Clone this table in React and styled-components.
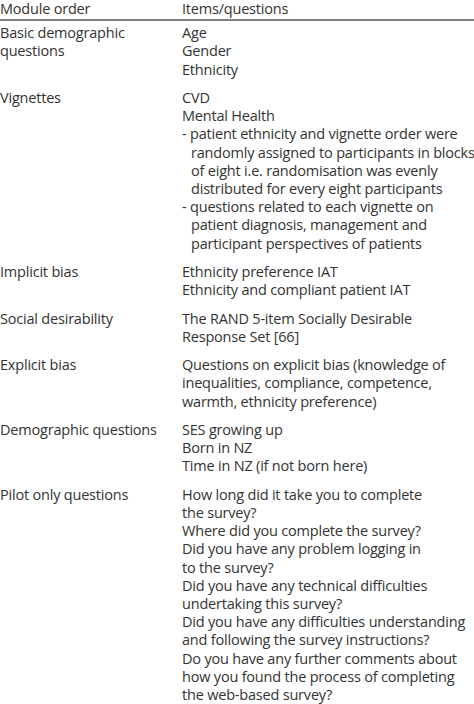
import React from "react";
import styled, { createGlobalStyle } from "styled-components";

const Global = createGlobalStyle`
  html, body { margin: 0; padding: 0; background: #fff; }
  body { width: 474px; height: 704px; overflow: hidden; }
`;

const Table = styled.div`
  width: 474px;
  font-family: "Open Sans", "Noto Sans", sans-serif;
  font-size: 14.5px;
  letter-spacing: -0.2px;
  line-height: 18.2px;
  color: #333;
`;

const HeaderRow = styled.div`
  display: grid;
  grid-template-columns: 182px 1fr;
  padding-bottom: 1px;
  border-bottom: 2px solid #7f7f7f;
`;

const Body = styled.div`
  display: grid;
  row-gap: 10.2px;
  padding-top: 3px;
`;

const Row = styled.div`
  display: grid;
  grid-template-columns: 182px 1fr;
`;

const Cell = styled.div`
  white-space: nowrap;
`;

const Line = styled.div`
  padding-left: ${(p) => (p.$hang ? "9px" : "0")};
`;

const rows = [
  {
    m: ["Basic demographic", "questions"],
    i: [["Age"], ["Gender"], ["Ethnicity"]],
  },
  {
    m: ["Vignettes"],
    i: [
      ["CVD"],
      ["Mental Health"],
      ["- patient ethnicity and vignette order were"],
      ["randomly assigned to participants in blocks", true],
      ["of eight i.e. randomisation was evenly", true],
      ["distributed for every eight participants", true],
      ["- questions related to each vignette on"],
      ["patient diagnosis, management and", true],
      ["participant perspectives of patients", true],
    ],
  },
  {
    m: ["Implicit bias"],
    i: [["Ethnicity preference IAT"], ["Ethnicity and compliant patient IAT"]],
  },
  {
    m: ["Social desirability"],
    i: [["The RAND 5-item Socially Desirable"], ["Response Set [66]"]],
  },
  {
    m: ["Explicit bias"],
    i: [
      ["Questions on explicit bias (knowledge of"],
      ["inequalities, compliance, competence,"],
      ["warmth, ethnicity preference)"],
    ],
  },
  {
    m: ["Demographic questions"],
    i: [["SES growing up"], ["Born in NZ"], ["Time in NZ (if not born here)"]],
  },
  {
    m: ["Pilot only questions"],
    i: [
      ["How long did it take you to complete"],
      ["the survey?"],
      ["Where did you complete the survey?"],
      ["Did you have any problem logging in"],
      ["to the survey?"],
      ["Did you have any technical difficulties"],
      ["undertaking this survey?"],
      ["Did you have any difficulties understanding"],
      ["and following the survey instructions?"],
      ["Do you have any further comments about"],
      ["how you found the process of completing"],
      ["the web-based survey?"],
    ],
  },
];

export default function App() {
  return (
    <>
      <Global />
      <Table>
        <HeaderRow>
          <Cell>Module order</Cell>
          <Cell>Items/questions</Cell>
        </HeaderRow>
        <Body>
          {rows.map((r, k) => (
            <Row key={k}>
              <Cell>
                {r.m.map((t, j) => (
                  <Line key={j}>{t}</Line>
                ))}
              </Cell>
              <Cell>
                {r.i.map(([t, hang], j) => (
                  <Line key={j} $hang={hang}>
                    {t}
                  </Line>
                ))}
              </Cell>
            </Row>
          ))}
        </Body>
      </Table>
    </>
  );
}
